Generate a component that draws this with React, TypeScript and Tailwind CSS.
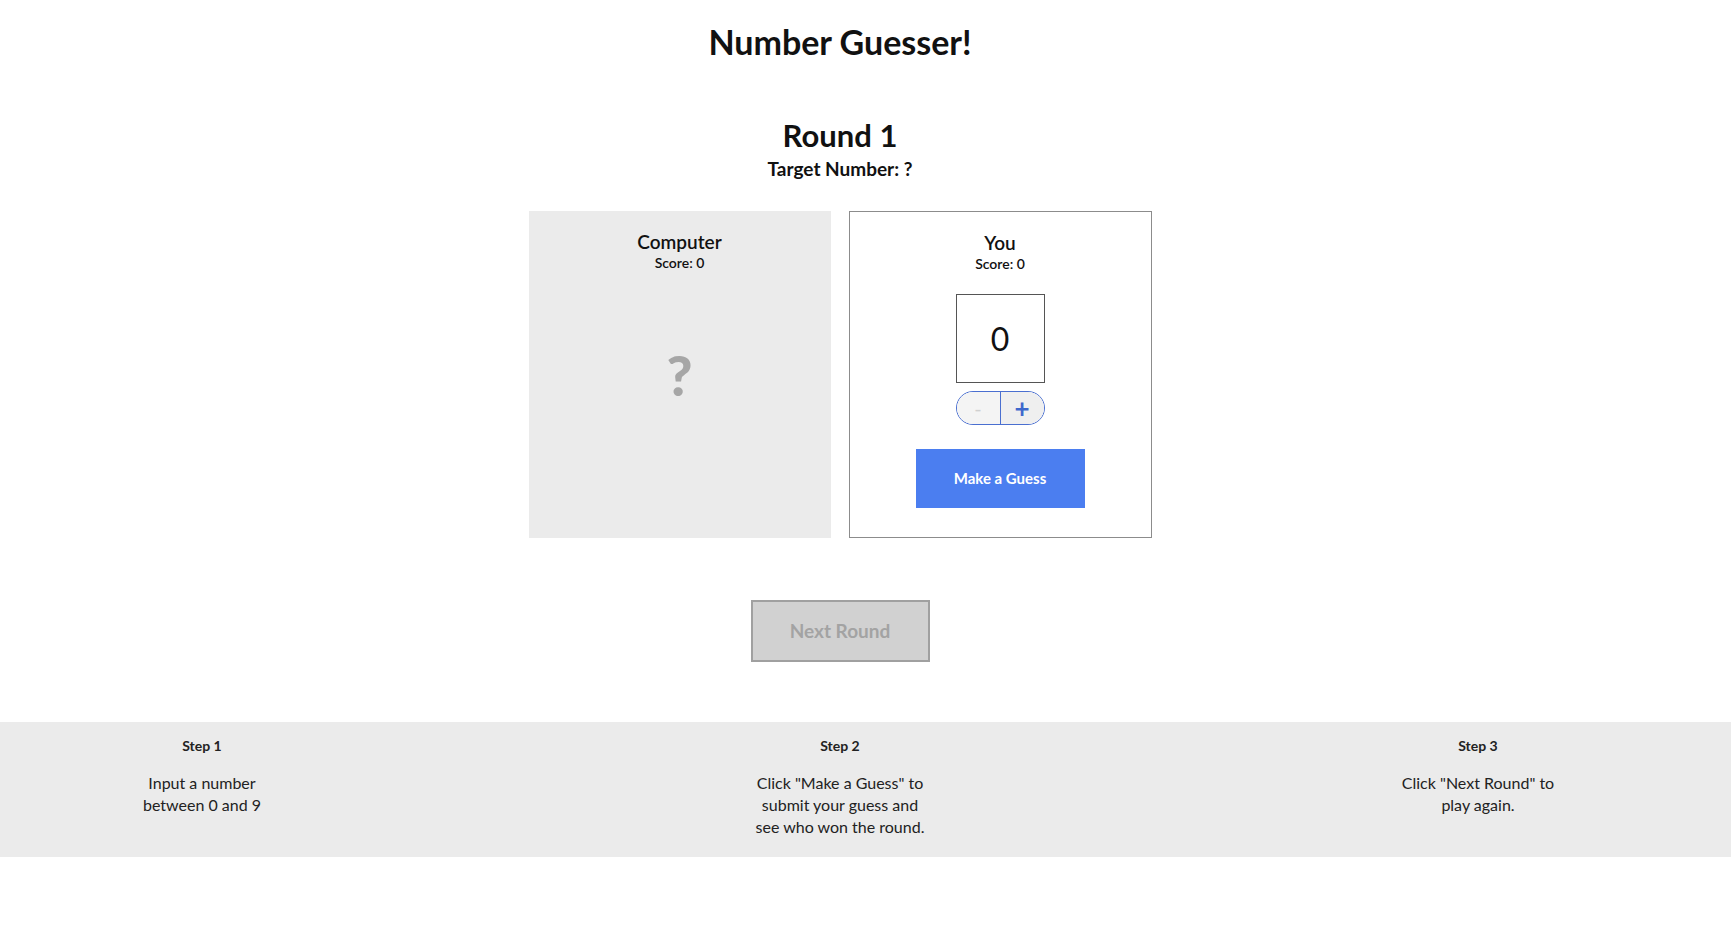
import { useState } from "react";

const steps = [
  { title: "Step 1", lines: ["Input a number", "between 0 and 9"] },
  {
    title: "Step 2",
    lines: ['Click "Make a Guess" to', "submit your guess and", "see who won the round."],
  },
  { title: "Step 3", lines: ['Click "Next Round" to', "play again."] },
];

export default function App() {
  const [guess, setGuess] = useState(0);

  return (
    <div className="min-h-[931px] bg-white font-['Lato','Noto_Sans',sans-serif] text-[#111]">
      <div className="flex w-[1680px] flex-col items-center">
        <h1 className="pt-[22px] text-[34px] font-bold leading-[40px]">Number Guesser!</h1>

        <h2 className="mt-[55px] text-[31px] font-bold leading-[36px]">Round 1</h2>
        <p className="mt-[4px] text-[19px] font-bold leading-[24px]">Target Number: ?</p>

        <div className="mt-[30px] flex gap-[18px]">
          <div className="flex h-[327px] w-[302px] flex-col items-center bg-[#ebebeb] pt-[19px]">
            <h3 className="text-[19px] font-semibold leading-[24px]">Computer</h3>
            <p className="text-[14px] font-semibold leading-[18px]">Score: 0</p>
            <div className="mt-[73px] text-[56px] font-black leading-[60px] text-[#a6a6a6]">?</div>
          </div>

          <div className="flex h-[327px] w-[303px] flex-col items-center border border-[#8c8c8c] bg-white pt-[19px]">
            <h3 className="text-[19px] font-semibold leading-[24px]">You</h3>
            <p className="text-[14px] font-semibold leading-[18px]">Score: 0</p>
            <div className="mt-[21px] flex h-[89px] w-[89px] items-center justify-center border border-[#555] text-[32px]">
              {guess}
            </div>
            <div className="mt-[8px] flex h-[34px] w-[89px] overflow-hidden rounded-full border border-[#4a6fd0]">
              <button
                className="flex-1 bg-[#f4f4f4] text-[20px] leading-none text-[#d0d0d0]"
                onClick={() => setGuess((g) => Math.max(0, g - 1))}
              >
                -
              </button>
              <button
                className="flex-1 border-l border-[#4a6fd0] bg-[#efefef] text-[26px] font-bold leading-none text-[#3e68cc]"
                onClick={() => setGuess((g) => Math.min(9, g + 1))}
              >
                +
              </button>
            </div>
            <button className="mt-[24px] h-[59px] w-[169px] bg-[#4b7ef0] text-[15px] font-bold text-white">
              Make a Guess
            </button>
          </div>
        </div>

        <button className="mt-[62px] h-[62px] w-[179px] border-2 border-[#a0a0a0] bg-[#d1d1d1] text-[19px] font-bold text-[#a3a3a3]">
          Next Round
        </button>
      </div>

      <footer className="mt-[60px] h-[135px] bg-[#ebebeb]">
        <div className="flex w-[1680px] justify-between pt-[14px]">
          {steps.map((s) => (
            <div key={s.title} className="flex w-[404px] flex-col items-center text-center text-[#222]">
              <h4 className="text-[14px] font-bold leading-[20px]">{s.title}</h4>
              <p className="mt-[16px] text-[16px] leading-[22px]">
                {s.lines.map((l) => (
                  <span key={l} className="block">
                    {l}
                  </span>
                ))}
              </p>
            </div>
          ))}
        </div>
      </footer>
    </div>
  );
}
